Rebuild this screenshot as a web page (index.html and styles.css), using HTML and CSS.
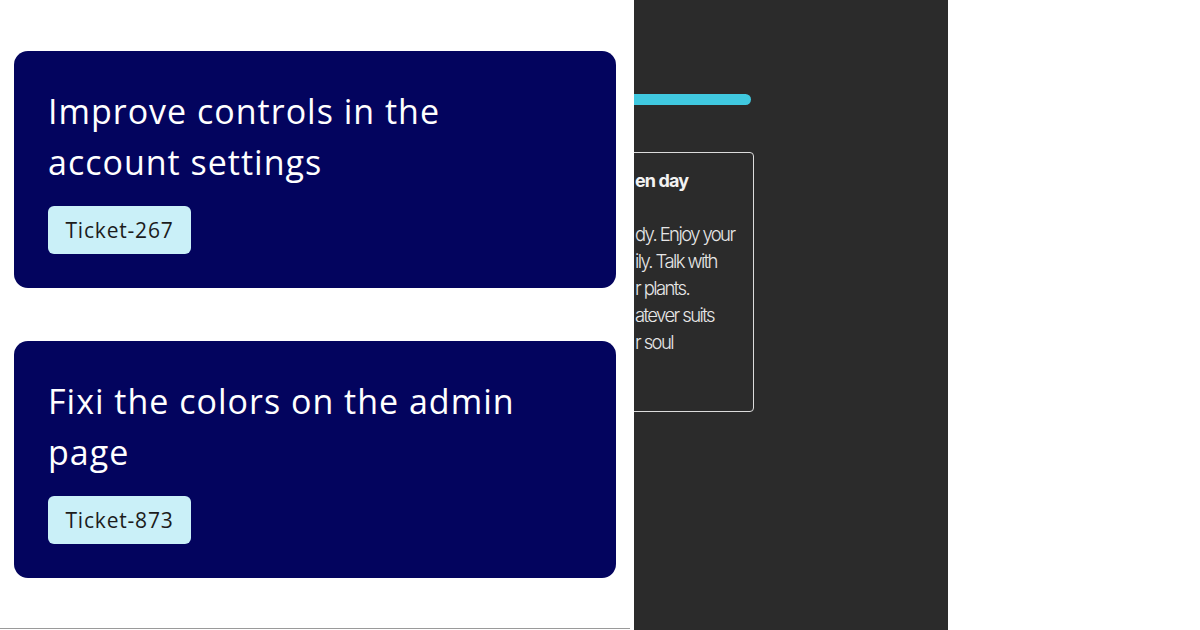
FILE: index.html
```html
<!DOCTYPE html>
<html>
<head>
<meta charset="utf-8">
<link rel="stylesheet" href="styles.css">
</head>
<body>
<div class="page">
  <section class="board">
    <div class="card">
      <h2 class="card-title">Improve controls in the account settings</h2>
      <span class="tag">Ticket-267</span>
    </div>
    <div class="card">
      <h2 class="card-title">Fixi the colors on the admin page</h2>
      <span class="tag">Ticket-873</span>
    </div>
    <div class="board-line"></div>
  </section>
  <section class="dark">
    <div class="progress"></div>
    <div class="note">
      <h3 class="note-title">en day</h3>
      <p class="note-text">dy. Enjoy your<br>ily. Talk with<br>r plants.<br>atever suits<br>r soul</p>
    </div>
  </section>
  <section class="blank"></section>
</div>
</body>
</html>
```
FILE: styles.css
```css
html, body { margin: 0; padding: 0; background: #fff; }
.page { display: flex; width: 1200px; height: 630px; overflow: hidden; }
.board {
  width: 634px; height: 630px; box-sizing: border-box;
  padding: 51px 18px 0 14px;
  display: flex; flex-direction: column; gap: 53px;
  background: #fff; position: relative;
}
.board-line { position: absolute; left: 0; bottom: 1px; width: 630px; height: 1px; background: #9a9a9a; }
.card {
  background: #03045e; border-radius: 14px;
  height: 237px; box-sizing: border-box;
  padding: 35px 34px 34px 34px;
  display: flex; flex-direction: column; align-items: flex-start;
}
.card-title {
  margin: 0; color: #fff;
  font-family: "Open Sans", sans-serif; font-weight: 400;
  font-size: 34px; line-height: 51px; letter-spacing: 1px;
  max-width: 500px;
}
.tag {
  margin-top: 18px;
  background: #caf0f8; color: #1c1c1c; border-radius: 6px;
  height: 48px; width: 143px; box-sizing: border-box;
  display: flex; align-items: center; justify-content: center;
  font-family: "Open Sans", sans-serif; font-size: 21px; letter-spacing: 0.8px;
}
.dark {
  width: 314px; height: 630px; background: #2b2b2b;
  overflow: hidden; padding-top: 94px; box-sizing: border-box;
}
.progress { width: 117px; height: 11px; background: #40c9e0; border-radius: 0 6px 6px 0; }
.note {
  margin-top: 47px; margin-left: -20px;
  width: 140px; height: 260px; box-sizing: border-box;
  border: 1.5px solid #dcdcdc; border-radius: 4px;
  padding: 15px 0 0 20px;
  font-family: "Inter", sans-serif; color: #e6e6e6;
}
.note-title { margin: 0; font-size: 18px; font-weight: 700; letter-spacing: -0.9px; line-height: 26px; color: #f2f2f2; }
.note-text { margin: 27px 0 0 0; font-size: 18.5px; line-height: 27px; letter-spacing: -1.6px; font-weight: 300; }
.blank { flex: 1; background: #fff; }
```
